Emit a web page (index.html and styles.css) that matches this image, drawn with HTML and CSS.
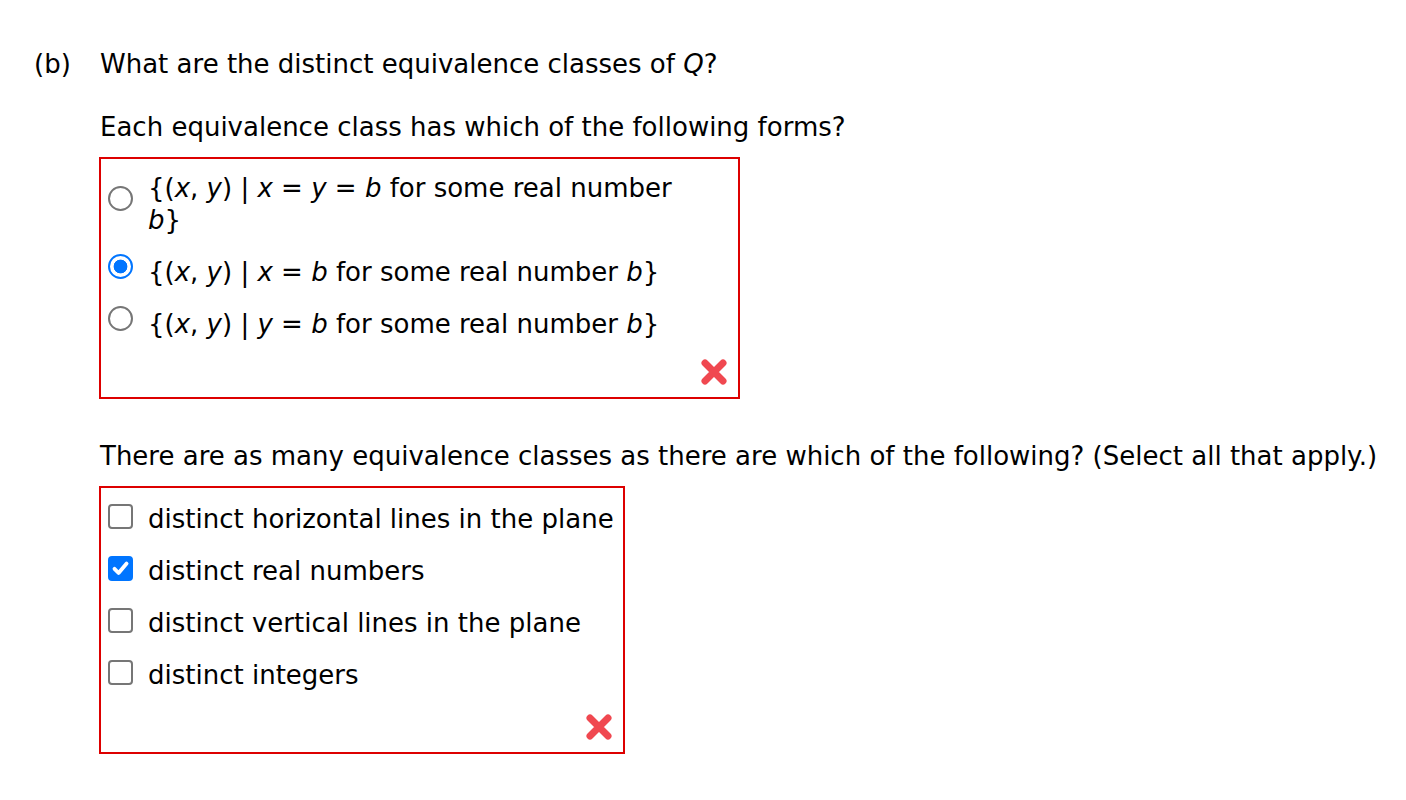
FILE: index.html
```html
<!DOCTYPE html>
<html>

<head>
  <meta charset="UTF-8">
  <meta name="viewport" content="width=device-width, initial-scale=1.0">
  <title>Equivalence classes</title>
  <link rel="stylesheet" href="styles.css">
</head>

<body>
  <div class="part">
    <div class="part-label">(b)</div>
    <div class="part-body">
      <p class="prompt">What are the distinct equivalence classes of <i>Q</i>?</p>

      <p class="prompt sub">Each equivalence class has which of the following forms?</p>
      <div class="answer answer-1">
        <ul class="choices">
          <li class="choice">
            <span class="radio"></span>
            <span class="choice-text">{(<i>x</i>, <i>y</i>) | <i>x</i> = <i>y</i> = <i>b</i> for some real number <i>b</i>}</span>
          </li>
          <li class="choice">
            <span class="radio on"></span>
            <span class="choice-text">{(<i>x</i>, <i>y</i>) | <i>x</i> = <i>b</i> for some real number <i>b</i>}</span>
          </li>
          <li class="choice">
            <span class="radio"></span>
            <span class="choice-text">{(<i>x</i>, <i>y</i>) | <i>y</i> = <i>b</i> for some real number <i>b</i>}</span>
          </li>
        </ul>
        <div class="mark">
          <svg class="wrong" viewBox="0 0 28 28">
            <path d="M5 5 L23 23 M23 5 L5 23" />
          </svg>
        </div>
      </div>

      <p class="prompt sub-2">There are as many equivalence classes as there are which of the following? (Select all that apply.)</p>
      <div class="answer answer-2">
        <ul class="choices">
          <li class="choice">
            <span class="check"></span>
            <span class="choice-text">distinct horizontal lines in the plane</span>
          </li>
          <li class="choice">
            <span class="check on">
              <svg viewBox="0 0 25 25"><path d="M6.5 12.8 L10.6 17 L18.6 7.6" /></svg>
            </span>
            <span class="choice-text">distinct real numbers</span>
          </li>
          <li class="choice">
            <span class="check"></span>
            <span class="choice-text">distinct vertical lines in the plane</span>
          </li>
          <li class="choice">
            <span class="check"></span>
            <span class="choice-text">distinct integers</span>
          </li>
        </ul>
        <div class="mark">
          <svg class="wrong" viewBox="0 0 28 28">
            <path d="M5 5 L23 23 M23 5 L5 23" />
          </svg>
        </div>
      </div>
    </div>
  </div>
</body>

</html>
```

FILE: styles.css
```css
body {
  margin: 0;
  background: #fff;
  color: #000;
  font-family: Verdana, "DejaVu Sans", sans-serif;
  font-size: 26px;
  line-height: 32px;
}

i {
  font-style: italic;
}

.part {
  display: flex;
  padding: 48px 0 0 34px;
}

.part-label {
  width: 66px;
  flex-shrink: 0;
}

.part-body {
  flex: 1;
}

.prompt {
  margin: 0;
}

.sub {
  margin-top: 31px;
}

.sub-2 {
  margin-top: 41px;
}

.answer {
  box-sizing: border-box;
  border: 2px solid #dd0000;
  margin-top: 14px;
  padding: 0 10px 11px 7px;
  display: flex;
  flex-direction: column;
}

.answer-1 {
  width: 641px;
  margin-left: -1px;
  padding-top: 13px;
}

.answer-2 {
  width: 526px;
  margin-left: -1px;
  padding-top: 15px;
}

.choices {
  list-style: none;
  margin: 0;
  padding: 0;
  display: flex;
  flex-direction: column;
  gap: 20px;
}

.answer-1 .choices {
  padding-right: 36px;
}

.answer-2 .choice-text {
  white-space: nowrap;
}

.choice {
  display: flex;
  align-items: center;
  gap: 15px;
}

.choice-text {
  flex: 1;
}

.radio,
.check {
  box-sizing: border-box;
  flex-shrink: 0;
  width: 25px;
  height: 25px;
  border: 2px solid #767676;
  background: #fff;
}

.radio {
  border-radius: 50%;
  margin-top: -12px;
}

.radio.on {
  border: 2.5px solid #0075ff;
  background: radial-gradient(circle, #0075ff 0 6.6px, #fff 7.2px);
}

.check {
  border-radius: 4px;
  margin-top: -5px;
}

.check.on {
  border-color: #0075ff;
  background: #0075ff;
  position: relative;
}

.check.on svg {
  position: absolute;
  top: -2px;
  left: -2px;
  width: 25px;
  height: 25px;
}

.check.on path {
  fill: none;
  stroke: #fff;
  stroke-width: 3.8;
  stroke-linecap: round;
  stroke-linejoin: round;
}

.mark {
  display: flex;
  justify-content: flex-end;
}

.answer-1 .mark {
  margin-top: 18px;
}

.answer-2 .mark {
  margin-top: 22px;
}

.wrong {
  width: 28px;
  height: 28px;
  filter: blur(0.7px);
}

.wrong path {
  fill: none;
  stroke: #f04850;
  stroke-width: 7;
  stroke-linecap: round;
}
```
